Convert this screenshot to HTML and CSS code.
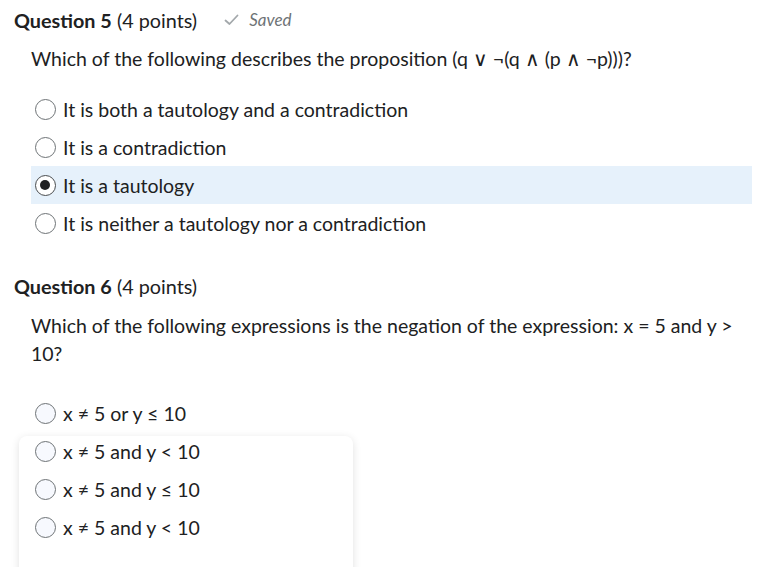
FILE: index.html
```html
<!DOCTYPE html>
<html lang="en">
<head>
<meta charset="utf-8">
<link rel="stylesheet" href="styles.css">
</head>
<body>
<div class="page">
  <section class="question q5">
    <h2 class="q-head"><b>Question 5</b> (4 points)<span class="saved"><svg class="check" viewBox="0 0 15 12" width="15" height="12"><path d="M1.5 6.5 L5.5 10 L13.5 1.5" fill="none" stroke="#a3a8ab" stroke-width="1.8" stroke-linecap="round" stroke-linejoin="round"/></svg><i>Saved</i></span></h2>
    <p class="q-text">Which of the following describes the proposition (q ∨ ¬(q ∧ (p ∧ ¬p)))?</p>
    <ul class="options">
      <li class="opt"><span class="radio"></span><span>It is both a tautology and a contradiction</span></li>
      <li class="opt"><span class="radio"></span><span>It is a contradiction</span></li>
      <li class="opt selected"><span class="radio checked"></span><span>It is a tautology</span></li>
      <li class="opt"><span class="radio"></span><span>It is neither a tautology nor a contradiction</span></li>
    </ul>
  </section>
  <section class="question q6">
    <h2 class="q-head"><b>Question 6</b> (4 points)</h2>
    <p class="q-text">Which of the following expressions is the negation of the expression: x = 5 and y &gt;<br>10?</p>
    <div class="q6-body">
      <div class="card"></div>
      <ul class="options light">
        <li class="opt"><span class="radio"></span><span>x ≠ 5 or y ≤ 10</span></li>
        <li class="opt"><span class="radio"></span><span>x ≠ 5 and y &lt; 10</span></li>
        <li class="opt"><span class="radio"></span><span>x ≠ 5 and y ≤ 10</span></li>
        <li class="opt"><span class="radio"></span><span>x ≠ 5 and y &lt; 10</span></li>
      </ul>
    </div>
  </section>
</div>
</body>
</html>
```
FILE: styles.css
```css
html, body {
  margin: 0;
  padding: 0;
  background: #ffffff;
}
body {
  font-family: Lato, "Open Sans", sans-serif;
  color: #202122;
  width: 770px;
  height: 567px;
  overflow: hidden;
}
.page {
  padding: 7px 0 0 0;
}
.q-head {
  margin: 0;
  padding-left: 14px;
  font-size: 19.8px;
  font-weight: 400;
  line-height: 26px;
  display: flex;
  align-items: center;
  white-space: pre;
}
.q-head b {
  font-weight: 700;
}
.saved {
  display: inline-flex;
  align-items: center;
  margin-left: 27px;
  color: #6e7376;
  font-size: 17px;
}
.saved .check {
  margin-right: 10px;
}
.q-text {
  margin: 0;
  padding-left: 31px;
  font-size: 19.5px;
  line-height: 28px;
}
.q5 .q-text {
  margin-top: 12px;
}
.options {
  list-style: none;
  margin: 0;
  padding: 0;
  width: 721px;
  margin-left: 31px;
}
.q5 .options {
  margin-top: 17px;
}
.opt {
  height: 38px;
  display: flex;
  align-items: center;
  padding-left: 4px;
  gap: 7px;
  font-size: 19.5px;
}
.opt.selected {
  background: #e6f1fb;
}
.radio {
  width: 21px;
  height: 21px;
  box-sizing: border-box;
  border: 1px solid #6e7376;
  border-radius: 50%;
  background: #ffffff;
  flex: none;
  position: relative;
}
.radio.checked {
  border: 1.5px solid #494c4e;
}
.radio.checked::after {
  content: "";
  position: absolute;
  left: 4px;
  top: 4px;
  width: 10px;
  height: 10px;
  border-radius: 50%;
  background: #202122;
}
.q6 {
  margin-top: 31px;
}
.q6 .q-text {
  margin-top: 13px;
}
.q6-body {
  position: relative;
  margin-top: 26px;
}
.options.light .opt:nth-child(n+3) {
  height: 38.5px;
}
.options.light .radio {
  background: #f7f9fe;
}
.card {
  position: absolute;
  left: 19px;
  top: 42px;
  width: 334px;
  height: 200px;
  background: #ffffff;
  border-radius: 8px;
  box-shadow: 0 2px 9px rgba(0, 0, 0, 0.12);
}
.options.light {
  position: relative;
}
```
